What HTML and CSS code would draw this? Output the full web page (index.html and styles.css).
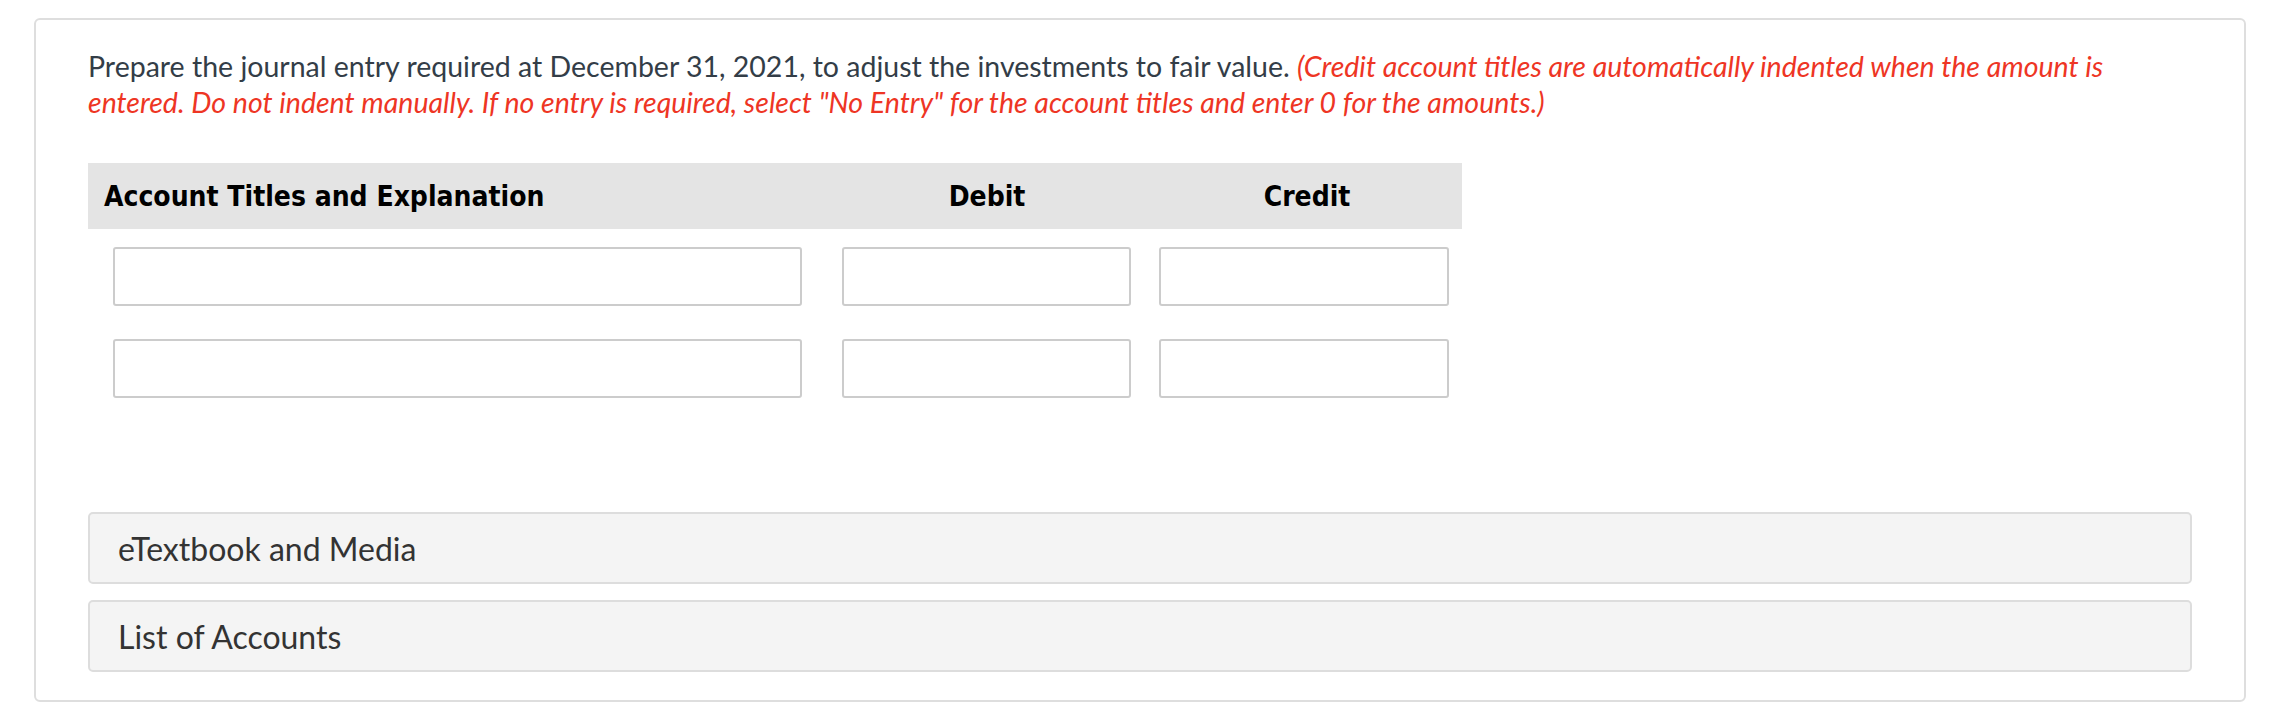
FILE: index.html
```html
<!DOCTYPE html>
<html lang="en">
<head>
  <meta charset="UTF-8">
  <title>Journal Entry</title>
  <link rel="stylesheet" href="styles.css">
</head>
<body>

  <!-- Question card -->
  <div class="question-card">
    <p class="question-text">
      Prepare the journal entry required at December 31, 2021, to adjust the investments to fair value.
      <em class="instructions">(Credit account titles are automatically indented when the amount is entered. Do not indent manually. If no entry is required, select "No Entry" for the account titles and enter 0 for the amounts.)</em>
    </p>

    <!-- Journal entry table -->
    <div class="journal">
      <div class="journal-head">
        <div class="col-title">Account Titles and Explanation</div>
        <div class="col-debit">Debit</div>
        <div class="col-credit">Credit</div>
      </div>
      <div class="journal-row">
        <input type="text" class="input-title">
        <input type="text" class="input-amount">
        <input type="text" class="input-amount credit">
      </div>
      <div class="journal-row">
        <input type="text" class="input-title">
        <input type="text" class="input-amount">
        <input type="text" class="input-amount credit">
      </div>
    </div>

    <!-- Resource panels -->
    <div class="panels">
      <div class="panel">eTextbook and Media</div>
      <div class="panel">List of Accounts</div>
    </div>
  </div>

</body>
</html>
```

FILE: styles.css
```css
/* Overall Styling */
body {
  font-family: 'Lato', 'Open Sans', sans-serif;
  background-color: #fff;
  margin: 0;
  padding: 18px 46px 19px 34px;
}

/* Question Card */
.question-card {
  border: 2px solid #dedede;
  border-radius: 6px;
  padding: 28px 52px 28px 52px;
}

.question-text {
  margin: 0;
  font-size: 28.5px;
  line-height: 36px;
  color: #333d47;
}

.instructions {
  color: #ee3524;
}

/* Journal Table */
.journal {
  width: 1374px;
  margin-top: 43px;
}

.journal-head {
  display: grid;
  grid-template-columns: 734px 330px 310px;
  height: 66px;
  align-items: center;
  background-color: #e4e4e4;
  font-family: 'DejaVu Sans Condensed', 'DejaVu Sans', sans-serif;
  font-weight: bold;
  font-size: 28px;
  color: #000;
}

.col-title {
  padding-left: 16px;
}

.col-debit,
.col-credit {
  text-align: center;
}

.journal-row {
  display: flex;
  padding-left: 25px;
  margin-top: 18px;
}

.journal-row + .journal-row {
  margin-top: 33px;
}

.journal-row input {
  box-sizing: border-box;
  height: 59px;
  border: 2px solid #cccccc;
  border-radius: 3px;
  background-color: #fff;
  font-size: 20px;
  padding: 0 10px;
  margin: 0;
}

.input-title {
  width: 689px;
}

.input-amount {
  width: 289px;
  margin-left: 40px !important;
}

.input-amount.credit {
  width: 290px;
  margin-left: 28px !important;
}

/* Panels */
.panels {
  margin-top: 114px;
  display: flex;
  flex-direction: column;
  gap: 16px;
}

.panel {
  box-sizing: border-box;
  height: 72px;
  background-color: #f4f4f4;
  border: 2px solid #dddddd;
  border-radius: 5px;
  padding-left: 28px;
  display: flex;
  align-items: center;
  font-size: 32px;
  color: #333;
}
```
